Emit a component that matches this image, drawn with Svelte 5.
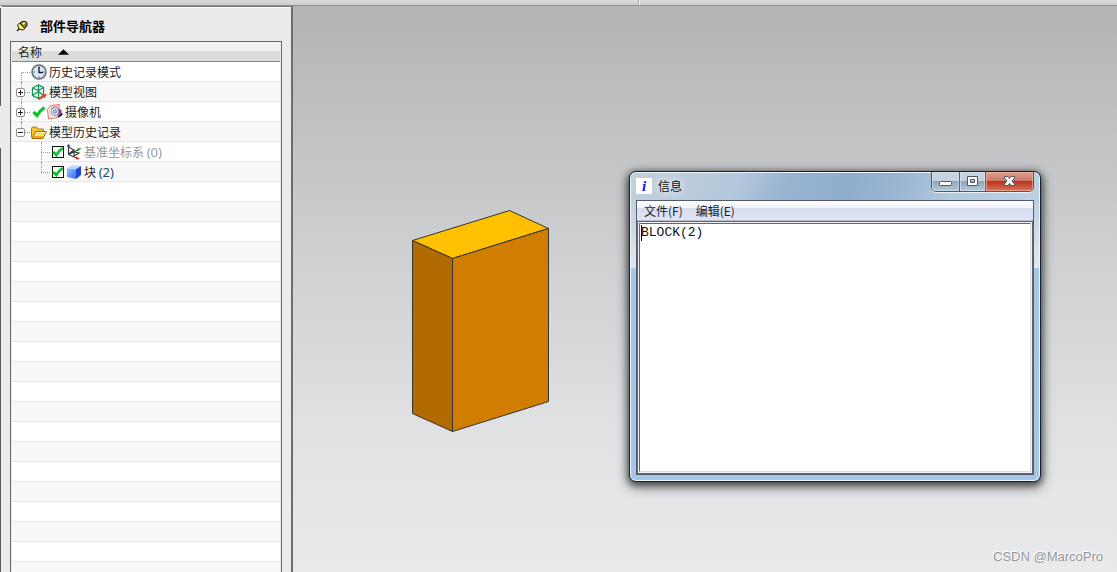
<script>
	const nodes = [
		{ id: 'mode', label: '历史记录模式', icon: 'clock', branch: 'first' },
		{ id: 'views', label: '模型视图', icon: 'views', branch: 'middle', expander: '+' },
		{ id: 'cameras', label: '摄像机', icon: 'camera', branch: 'middle', expander: '+', tick: true },
		{ id: 'history', label: '模型历史记录', icon: 'folder', branch: 'last', expander: '-' },
		{ id: 'datum', label: '基准坐标系', count: 0, icon: 'datum', branch: 'middle', child: true, muted: true },
		{ id: 'block', label: '块', count: 2, icon: 'block', branch: 'last', child: true }
	];

	let checked = $state({ datum: true, block: true });
	let info = $state('BLOCK(2)');
	let infoOpen = $state(true);
</script>

{#snippet icon(name)}
	<svg class="icon" viewBox="0 0 16 16" aria-hidden="true">
		{#if name === 'clock'}
			<circle cx="8" cy="8" r="7" fill="#d9e6f2" stroke="#686b6e" stroke-width="1.5" />
			<circle cx="8" cy="8" r="5.6" fill="#dcebf9" stroke="#a9b7c5" stroke-width=".6" />
			<path d="M8 2.5V4M8 12v1.5M2.5 8H4M12 8h1.5" stroke="#53789b" />
			<path d="M8 3v5.5h4" fill="none" stroke="#16212d" stroke-width="1.4" />
		{:else if name === 'views'}
			<path d="M1.5 4 7.5 1l5 2.500v8L7.500 14.500l-6-3zM1.500 4l6 2.500 5-3M7.500 6.500v8M7.500 1v6M1.500 11.500l6-4 5 4" fill="none" stroke="#13985c" stroke-width="1.3" />
			<path d="m7.5 15.5 5-3" stroke="#ef4423" stroke-width="1.8" />
			<path d="m11 10.500 5-.5-2.500 4.500z" fill="#ed3b21" />
		{:else if name === 'camera'}
			<path d="m.5 5.5 3-4 9-1-2 13-9 1.500z" fill="#fbe6e4" stroke="#e8706a" />
			<path d="m4.500 2.500 6.500-1-.5 3-7 1z" fill="#e7a5b4" />
			<circle cx="8" cy="7.5" r="4" fill="#dceaf5" stroke="#8897ad" />
			<circle cx="8" cy="7.5" r="1.8" fill="#c3b2d2" stroke="#607c9b" stroke-width=".7" />
			<path d="m11.500 4.500 3 1.500.5 5-3.500 2z" fill="#a13f9d" />
			<path d="m11 14 4.500-3V9l-4 2.500z" fill="#221b3a" />
		{:else if name === 'folder'}
			<path d="M.5 13.500v-9l1-1.500h4l1.500 2h5.500v2.500" fill="#f6c437" stroke="#a97c1c" />
			<path d="M1 14.500 4.500 7.500h11L12 14.500z" fill="#ffdc63" stroke="#a26b08" />
			<path d="M5 8.500h9.500" stroke="#fff1a9" />
			<path d="M2 14h9.500l1-2H3z" fill="#eaa61c" />
		{:else if name === 'datum'}
			<path d="M2.500 1v9.500l8 3.500M2.500 10.500 13 5.500M2.500 3 8 6 2.500 10M8 6v6M5.500 7.500 13 9l-5 3" fill="none" stroke="#3a3a3a" stroke-width="1.1" />
			<path d="M.5 2.500 2.500 0l2 2.500z" fill="#2230c8" />
			<path d="m11 4.500 4.500-.5-3 3z" fill="#159a2c" />
			<path d="m10 12.500 4 2.500-4 .5z" fill="#d72222" />
		{:else}
			<path d="M1 4 9.5 5.500 10 15 1 13z" fill="url(#block-face)" />
			<path d="M1 4 6.500 1.500 15 2 9.500 5.500z" fill="#b7d5ff" />
			<path d="M9.500 5.500 15 2v9l-5 4z" fill="#1f4ad0" />
			<defs>
				<linearGradient id="block-face" x2="1" y2="1">
					<stop stop-color="#9cc6ff" />
					<stop offset="1" stop-color="#3467ee" />
				</linearGradient>
			</defs>
		{/if}
	</svg>
{/snippet}

{#snippet tick()}
	<svg class="tick" viewBox="0 0 14 12" aria-hidden="true">
		<path d="M1.500 6 5 9.500Q8 4.500 12.500 1.500" fill="none" stroke="#0cc22a" stroke-width="3.2" />
	</svg>
{/snippet}

<div class="app">
	<div class="toolbar"><span></span><span></span></div>

	<div class="workspace">
		<div class="dock"><span></span><span></span></div>
		<aside class="navigator">
			<header>
				<svg class="pin" viewBox="0 0 12 12" aria-hidden="true">
					<path d="m1 11 3-3" stroke="#222" stroke-width="1.5" />
					<path d="m1.500 5 2-2 5.500 5.500-2 1.500-4-1z" fill="#fff35a" stroke="#222" />
					<path d="M4 3 6 1.500h4l1 1.500v3L8.500 8z" fill="#8b7f16" stroke="#222" />
					<path d="m6 3.500 2-1.500 1.500 1-2 2z" fill="#fff68b" />
				</svg>
				<h1>部件导航器</h1>
			</header>

			<div class="tree-panel">
				<button class="column" type="button">
					名称
					<svg viewBox="0 0 12 6" aria-hidden="true"><path d="m0 6 6-6 6 6z" /></svg>
				</button>
				<ul class="tree">
					{#each nodes as node (node.id)}
						<li class:child={node.child} class:muted={node.muted}>
							<span class="branch {node.branch}">
								{#if node.expander}
									<button class="expander" type="button" aria-label={node.label}>
										<svg viewBox="0 0 9 9" aria-hidden="true">
											<path d={node.expander === '+' ? 'M2 4.5h5M4.5 2v5' : 'M2 4.5h5'} />
										</svg>
									</button>
								{/if}
							</span>
							{#if node.child}
								<span class="check">
									<input id={node.id} type="checkbox" bind:checked={checked[node.id]} />
									{#if checked[node.id]}{@render tick()}{/if}
								</span>
								{@render icon(node.icon)}
								<label for={node.id}>{node.label} <span class="count">({node.count})</span></label>
							{:else}
								{#if node.tick}{@render tick()}{/if}
								{@render icon(node.icon)}
								<span class="label">{node.label}</span>
							{/if}
						</li>
					{/each}
				</ul>
			</div>
		</aside>

		<main class="viewport">
			<svg class="model" viewBox="0 0 138 223" role="img" aria-label="块">
				<path d="M.5 30.5 97.500.5l39 18-96 30z" fill="#ffc000" />
				<path d="m.5 30.5 40 18v173l-40-18z" fill="#b16b00" />
				<path d="m40.500 48.500 96-30v173l-96 30z" fill="#d17e00" />
			</svg>

			{#if infoOpen}
				<section class="window" aria-labelledby="info-title">
					<header class="title-bar">
						<span class="info-icon">i</span>
						<h2 id="info-title">信息</h2>
						<div class="controls">
							<button type="button" aria-label="最小化">
								<svg viewBox="0 0 13 11"><rect x=".5" y="5.5" width="12" height="4" rx="1" /></svg>
							</button>
							<button type="button" aria-label="最大化">
								<svg viewBox="0 0 13 11">
									<path d="M1.500.5h10v9h-10zM4.500 3.500v3h4v-3z" fill-rule="evenodd" />
								</svg>
							</button>
							<button class="close" type="button" aria-label="关闭" onclick={() => (infoOpen = false)}>
								<svg viewBox="0 0 13 11">
									<path d="M1.500.5h3.500l1.500 2 1.500-2h3.500v1.500L9 5l2.500 3v1.500H8l-1.500-2-1.500 2H1.500V8L4 5 1.500 2z" />
								</svg>
							</button>
						</div>
					</header>
					<div class="client">
						<nav class="menu-bar">
							<button type="button">文件(F)</button>
							<button type="button">编辑(E)</button>
						</nav>
						<div class="editor">
							<textarea aria-label="信息" spellcheck="false" bind:value={info}></textarea>
							<span class="caret"></span>
						</div>
					</div>
				</section>
			{/if}

			<p class="watermark">CSDN @MarcoPro</p>
		</main>
	</div>
</div>

<style>
	:global(body) {
		margin: 0;
	}

	.app,
	.app * {
		box-sizing: border-box;
	}

	.app {
		display: flex;
		flex-direction: column;
		height: 100vh;
		overflow: hidden;
		color: #222;
		font-family: 'Noto Sans CJK SC', sans-serif;
		font-size: 12px;
		line-height: 20px;
	}

	button {
		margin: 0;
		padding: 0;
		border: 0;
		background: none;
		color: inherit;
		font: inherit;
	}

	svg {
		display: block;
		flex: none;
	}

	h1,
	h2,
	p {
		margin: 0;
		font-size: 12px;
	}

	.toolbar {
		display: flex;
		flex: none;
		height: 6px;
		border-bottom: 1px solid #929292;
		background: linear-gradient(#d9d9d9, #cecece);
	}

	.toolbar span:first-child {
		width: 57.3%;
		border-right: 1px solid #f7f7f7;
		box-shadow: inset -1px 0 #a6a6a6;
	}

	.workspace {
		display: flex;
		flex: 1;
		min-height: 0;
	}

	.dock {
		display: flex;
		flex-direction: column;
		flex: none;
		gap: 42px;
		width: 2px;
		padding-top: 2px;
		background: #ebebeb;
	}

	.dock span {
		height: 98px;
		border-left: 1px solid #5b5b5b;
	}

	.dock span:last-child {
		flex: 1;
	}

	.navigator {
		display: flex;
		flex-direction: column;
		flex: none;
		width: 291px;
		border-top: 1px solid #777;
		border-right: 2px solid #6d6d6d;
		background: #ebebeb;
		box-shadow: inset 0 1px #fff;
	}

	.navigator header {
		display: flex;
		align-items: center;
		gap: 12px;
		height: 34px;
		padding: 4px 14px 0;
	}

	.navigator h1 {
		color: #000;
		font-size: 13px;
		font-weight: 700;
	}

	.pin {
		width: 12px;
		height: 12px;
	}

	.tree-panel {
		display: flex;
		flex-direction: column;
		flex: 1;
		margin: 0 9px 0 8px;
		border: 1px solid #666;
		border-bottom: 0;
		padding: 0 1px;
		background: #ededed;
	}

	.column {
		display: flex;
		flex: none;
		align-items: center;
		gap: 16px;
		height: 20px;
		padding-left: 6px;
		border-bottom: 1px solid #858585;
		background: linear-gradient(#f0f3f2 50%, #d8dadb 50%, #dcdedf);
	}

	.column svg {
		width: 11px;
		height: 6px;
	}

	.tree {
		flex: 1;
		margin: 0;
		padding: 0;
		list-style: none;
		background: repeating-linear-gradient(
			#fff 0 19px,
			#e6e6e6 19px 20px,
			#f7f7f7 20px 39px,
			#e6e6e6 39px 40px
		);
	}

	.tree li {
		display: flex;
		align-items: center;
		height: 20px;
	}

	.tree .child {
		padding-left: 20px;
	}

	.muted label {
		color: #969696;
	}

	.branch {
		display: grid;
		flex: none;
		grid-template: 10px 10px / 9px 9px;
		width: 18px;
		height: 20px;
	}

	.branch::before {
		grid-area: 1 / 2 / 3 / 3;
		border-left: 1px dotted #999;
		content: '';
	}

	.branch::after {
		grid-area: 2 / 2;
		border-top: 1px dotted #999;
		content: '';
	}

	.branch.first::before {
		grid-area: 2 / 2;
	}

	.branch.last::before {
		grid-area: 1 / 2;
	}

	.expander {
		z-index: 1;
		grid-area: 1 / 1 / 3 / 3;
		align-self: center;
		width: 9px;
		height: 9px;
		margin-left: 4px;
		border: 1px solid #909090;
		border-radius: 2px;
		background: #fff;
	}

	.expander svg {
		width: 9px;
		height: 9px;
		margin: -1px;
		stroke: #222;
	}

	.child .branch {
		width: 20px;
	}

	.icon {
		width: 16px;
		height: 16px;
		margin: 0 2px 0 1px;
	}

	.tick {
		width: 14px;
		height: 12px;
		margin-left: 2px;
	}

	.check {
		display: grid;
		margin-right: 1px;
	}

	.check input {
		grid-area: 1 / 1;
		width: 12px;
		height: 12px;
		margin: 0;
		border: 1px solid #111;
		background: #fff;
		appearance: none;
	}

	.check .tick {
		grid-area: 1 / 1;
		width: 12px;
		height: 12px;
		margin: 0;
		pointer-events: none;
	}

	.count {
		font-family: 'Noto Sans', sans-serif;
		font-size: 13px;
		color: #174d77;
	}

	.muted .count {
		color: #8f9fb0;
	}

	.viewport {
		position: relative;
		flex: 1;
		overflow: hidden;
		background: linear-gradient(#b3b4b6, #cecfd1 43%, #e0e1e3 74%, #e9eaec);
	}

	/* the model and the window float freely on the canvas */
	.model {
		position: absolute;
		top: 204px;
		left: 119px;
		width: 138px;
		height: 223px;
		stroke: #333;
		stroke-linejoin: round;
	}

	.window {
		position: absolute;
		top: 165px;
		left: 336px;
		display: flex;
		flex-direction: column;
		width: 412px;
		height: 311px;
		padding: 0 6px 6px;
		border: 1px solid #17202a;
		border-radius: 7px;
		background:
			linear-gradient(#e4edf600, #eaf1f8bb) 0 28px / 100% 68px no-repeat,
			linear-gradient(110deg, #c3d0dc, #b4c8dc 25%, #98b4d1 36%, #8fadcd 50%, #9bb6d2 62%, #b3c9de 74%, #c0d3e6) 0 0 / 100% 96px no-repeat,
			#a5c6e6;
		box-shadow:
			inset 0 0 0 1px #edf6fd,
			0 2px 7px 1px #00000090,
			0 4px 12px 2px #00000060;
	}

	.title-bar {
		display: flex;
		align-items: center;
		gap: 6px;
		height: 28px;
	}

	.info-icon {
		width: 16px;
		height: 16px;
		background: #fff;
		color: #1010f0;
		font: italic 700 15px/16px 'Liberation Serif', serif;
		text-align: center;
	}

	.title-bar h2 {
		color: #111;
		font-weight: 400;
		text-shadow:
			0 0 6px #fff,
			0 0 12px #fff;
	}

	.controls {
		display: flex;
		align-self: flex-start;
		height: 20px;
		margin-left: auto;
		border: 1px solid #4b5968;
		border-top: 0;
		border-radius: 0 0 5px 5px;
		box-shadow: 0 1px #e7f2fb;
		overflow: hidden;
	}

	.controls button {
		display: grid;
		place-items: center;
		width: 28px;
		border-right: 1px solid #526174;
		background: linear-gradient(#c5d2df 48%, #91a4b8 50%, #b6cbdf);
		box-shadow: inset 0 0 0 1px #dce8f399;
	}

	.controls button:nth-child(2) {
		width: 26px;
	}

	.controls .close {
		width: 47px;
		border-right: 0;
		background: linear-gradient(#dfa294, #cc7562 48%, #b83420 50%, #d97558);
		box-shadow: inset 0 0 0 1px #f0b9a7aa;
	}

	.controls svg {
		width: 13px;
		height: 11px;
		fill: #fff;
		stroke: #4d5664;
	}

	.client {
		display: flex;
		flex: 1;
		flex-direction: column;
		min-height: 0;
		border: 1px solid #535c68;
		background: #f4f5f8;
	}

	.menu-bar {
		display: flex;
		flex: none;
		gap: 13px;
		height: 20px;
		padding-left: 7px;
		border-bottom: 1px solid #b8bccd;
		background: linear-gradient(#fff, #f2f4fb 35%, #d7dcef 40%, #e0e5f5);
	}

	.editor {
		position: relative;
		flex: 1;
		border: 1px solid #666;
		padding: 1px;
		background: #f0f0f0;
	}

	.editor textarea {
		display: block;
		width: 100%;
		height: 100%;
		padding: 1px;
		border: 1px solid #666;
		border-right-color: #ddd;
		border-bottom-color: #ddd;
		background: #fff;
		color: #111;
		font: 13px/16px 'Liberation Mono', monospace;
		outline: 0;
		resize: none;
	}

	.caret {
		position: absolute;
		top: 3px;
		left: 3px;
		width: 1px;
		height: 16px;
		background: #000;
	}

	.watermark {
		position: absolute;
		right: 14px;
		bottom: 5px;
		color: #98999b;
		font: 13px/20px 'Liberation Sans', sans-serif;
		text-shadow: -1px -1px #fff;
	}
</style>
